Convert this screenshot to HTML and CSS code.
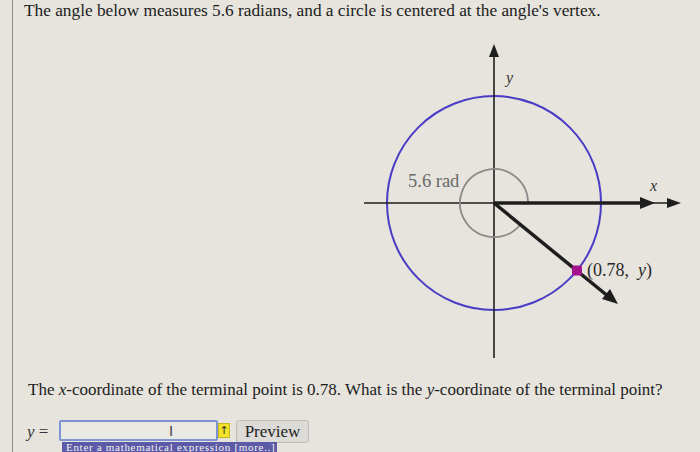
FILE: index.html
```html
<!DOCTYPE html>
<html>
<head>
<meta charset="utf-8">
<link rel="stylesheet" href="styles.css">
</head>
<body>
<div class="page">
  <p class="title">The angle below measures 5.6 radians, and a circle is centered at the angle's vertex.</p>
  <div class="figure">
    <svg class="diagram" width="330" height="325" viewBox="0 0 330 325">
      <circle cx="135" cy="163" r="107" fill="none" stroke="#4a3cc4" stroke-width="2"/>
      <line x1="135" y1="318" x2="135" y2="12" stroke="#1e1e1e" stroke-width="1.6"/>
      <polygon points="135,4 130,17 140,17" fill="#1e1e1e"/>
      <line x1="5" y1="163" x2="312" y2="163" stroke="#1e1e1e" stroke-width="1.6"/>
      <polygon points="322,163 308,158 308,168" fill="#1e1e1e"/>
      <path d="M 169 163 A 34 34 0 1 0 161.4 184.5" fill="none" stroke="#8a8a8a" stroke-width="1.8"/>
      <line x1="135" y1="163" x2="284" y2="163" stroke="#1e1e1e" stroke-width="3.5"/>
      <polygon points="296,163 281,157 281,169" fill="#1e1e1e"/>
      <line x1="135" y1="163" x2="250" y2="257" stroke="#1e1e1e" stroke-width="3.5"/>
      <polygon points="259,264 243,259 251,249" fill="#1e1e1e"/>
      <rect x="213" y="225.5" width="10" height="10" rx="2" fill="#a5128e"/>
      <text x="49" y="147" class="lbl-rad">5.6 rad</text>
      <text x="147" y="43" class="lbl-axis">y</text>
      <text x="291" y="151" class="lbl-axis">x</text>
      <text x="228" y="236" class="lbl-pt">(0.78,&#8194;<tspan class="it">y</tspan>)</text>
    </svg>
  </div>
  <p class="question">The <i>x</i>-coordinate of the terminal point is 0.78. What is the <i>y</i>-coordinate of the terminal point?</p>
  <div class="answer">
    <span class="var"><i>y</i> =</span>
    <div class="inputwrap">
      <div class="input"><span class="cursor">I</span></div>
      <div class="tip">Enter a mathematical expression [more..]</div>
    </div>
    <span class="arrowbtn">&#8593;</span>
    <button class="preview">Preview</button>
  </div>
</div>
</body>
</html>
```
FILE: styles.css
```css
html, body {
  margin: 0;
  padding: 0;
  background: #e6e4dd;
  overflow: hidden;
}
body {
  width: 700px;
  height: 452px;
  font-family: "Liberation Serif", "Times New Roman", serif;
  color: #1c1c1c;
}
.page {
  margin-left: 12px;
  border-left: 1.5px solid #8d8c88;
  height: 452px;
  box-sizing: border-box;
  padding-top: 1px;
}
.title {
  margin: 0;
  padding-left: 11px;
  font-size: 17.3px;
  line-height: 20px;
}
.figure {
  margin-top: 19px;
  padding-left: 346px;
  height: 325px;
}
.diagram {
  display: block;
}
.lbl-rad {
  font-family: "Liberation Serif", serif;
  font-size: 18.5px;
  fill: #6a6a6a;
}
.lbl-axis {
  font-family: "Liberation Serif", serif;
  font-style: italic;
  font-size: 16px;
  fill: #333;
}
.lbl-pt {
  font-family: "Liberation Serif", serif;
  font-size: 18px;
  fill: #2a2a2a;
}
.it {
  font-style: italic;
}
.question {
  margin: 15px 0 0 0;
  padding-left: 15px;
  font-size: 17px;
  line-height: 20px;
}
.answer {
  margin-top: 20px;
  padding-left: 14px;
  display: flex;
  align-items: flex-start;
  height: 32px;
}
.var {
  font-size: 17px;
  line-height: 22px;
  margin-top: 1px;
  width: 32px;
  color: #333;
}
.inputwrap {
  position: relative;
}
.input {
  width: 155px;
  height: 17px;
  border: 2px solid #7e93d6;
  border-radius: 2px;
  background: #e9e8e3;
  position: relative;
}
.cursor {
  position: absolute;
  left: 108px;
  top: 1px;
  font-family: "DejaVu Sans", sans-serif;
  font-size: 14px;
  color: #444;
}
.tip {
  position: absolute;
  left: 3px;
  top: 22px;
  width: 215px;
  height: 10px;
  background: #5c5aa6;
  color: #f2f2f2;
  font-family: "Liberation Serif", serif;
  font-size: 11px;
  line-height: 10px;
  letter-spacing: 0.7px;
  padding-left: 4px;
  box-sizing: border-box;
  white-space: nowrap;
  overflow: hidden;
}
.arrowbtn {
  margin-top: 3px;
  width: 12px;
  height: 15px;
  background: #f2e32a;
  border: 1px solid #c8b820;
  box-sizing: border-box;
  font-family: "DejaVu Sans", sans-serif;
  font-size: 11px;
  line-height: 13px;
  text-align: center;
  color: #333;
}
.preview {
  margin-left: 6px;
  width: 73px;
  height: 23px;
  padding: 0;
  background: #dcdbd7;
  border: 1px solid #bdbcb8;
  border-radius: 3px;
  font-family: "Liberation Serif", serif;
  font-size: 17px;
  color: #222;
}
```
